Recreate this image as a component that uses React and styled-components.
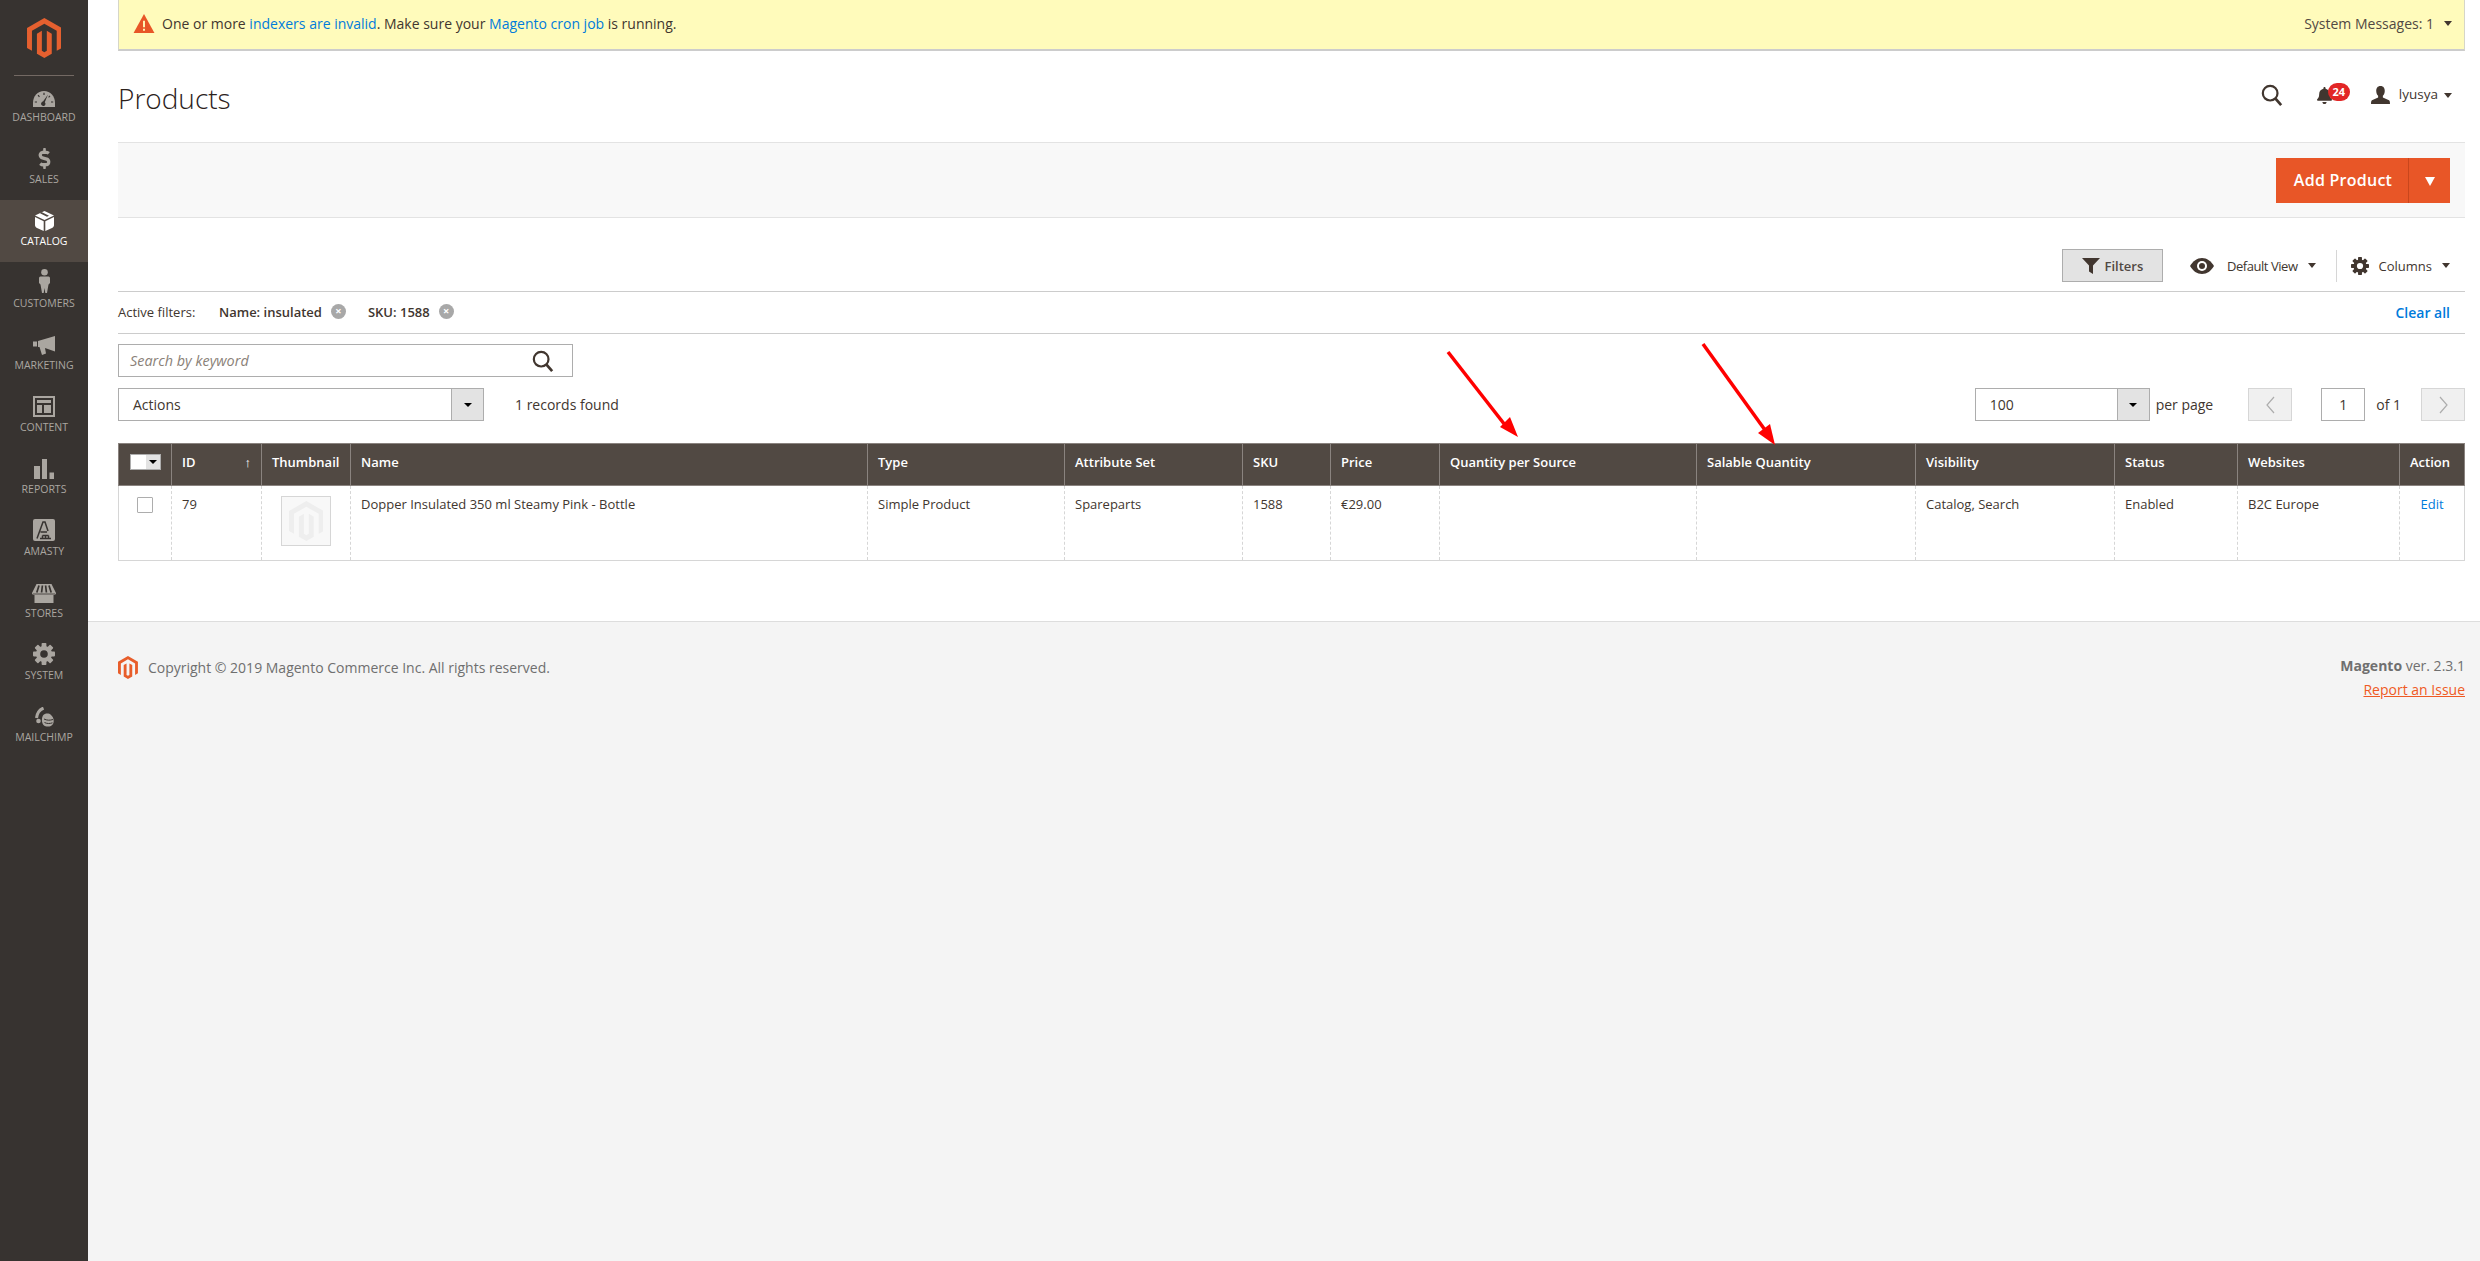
import React from "react";
import styled, { createGlobalStyle } from "styled-components";
import { FaBell, FaDollarSign } from "react-icons/fa";

const Global = createGlobalStyle`
  html, body { margin: 0; padding: 0; }
  body {
    background: #f4f4f4;
    font-family: "Open Sans", "Liberation Sans", sans-serif;
    font-size: 14px;
    color: #41362f;
  }
  * { box-sizing: border-box; }
`;

const Shell = styled.div`
  display: flex;
  min-height: 100vh;
`;

const Sidebar = styled.nav`
  width: 88px;
  flex: none;
  background: #373330;
  display: flex;
  flex-direction: column;
`;

const LogoBox = styled.div`
  height: 75px;
  display: flex;
  align-items: flex-start;
  justify-content: center;
  padding-top: 18px;
`;

const LogoLine = styled.div`
  height: 1px;
  margin: 0 14px;
  background: #736963;
`;

const MenuItem = styled.a`
  height: 62px;
  display: flex;
  flex-direction: column;
  align-items: center;
  justify-content: flex-end;
  padding-bottom: 13px;
  gap: 3px;
  font-size: 10.5px;
  line-height: 15px;
  color: ${(p) => (p.$active ? "#fff" : "#aaa6a0")};
  background: ${(p) => (p.$active ? "#514943" : "transparent")};
  svg { display: block; }
`;

const Main = styled.div`
  flex: 1;
  min-width: 0;
  display: flex;
  flex-direction: column;
`;

const Page = styled.div`
  background: #fff;
  padding: 0 15px 60px 30px;
  height: 621px;
`;

const Notice = styled.div`
  height: 51px;
  background: #fffbbb;
  border: 1px solid #d6d6c8;
  border-top: 0;
  border-bottom: 2px solid #ccc;
  display: flex;
  align-items: center;
  justify-content: space-between;
  padding: 0 12px 3px 14px;
  font-size: 14px;
`;

const NoticeText = styled.div`
  display: flex;
  align-items: center;
  gap: 7px;
`;

const Link = styled.a`
  color: #007bdb;
`;

const Caret = styled.span`
  display: inline-block;
  flex: none;
  width: 0;
  height: 0;
  margin-left: ${(p) => p.$gap || 0}px;
  border-left: ${(p) => p.$size || 4.5}px solid transparent;
  border-right: ${(p) => p.$size || 4.5}px solid transparent;
  border-top: ${(p) => p.$tall || (p.$size || 4.5) + 0.5}px solid ${(p) => p.$color || "#41362f"};
`;

const SysMessages = styled.div`
  display: flex;
  align-items: center;
  gap: 10px;
  color: #514943;
`;

const Header = styled.div`
  height: 91px;
  display: flex;
  align-items: center;
  justify-content: space-between;
`;

const Title = styled.h1`
  margin: 2px 0 0;
  font-size: 28px;
  font-weight: 300;
  line-height: 36px;
  color: #2b211b;
`;

const HeaderTools = styled.div`
  display: flex;
  align-items: center;
  margin: 0 13px 3px 0;
`;

const BellWrap = styled.div`
  position: relative;
  margin: 0 21px 0 33px;
  width: 34px;
  height: 24px;
  display: flex;
  align-items: center;
`;

const Badge = styled.span`
  position: absolute;
  left: 12px;
  top: 0;
  width: 22px;
  height: 18px;
  border-radius: 9px;
  background: #e22626;
  color: #fff;
  font-size: 11px;
  font-weight: 700;
  line-height: 18px;
  text-align: center;
`;

const UserName = styled.span`
  font-size: 13.5px;
  margin: 0 6px 2px 9px;
`;

const ActionBar = styled.div`
  height: 76px;
  background: #f8f8f8;
  border-top: 1px solid #e3e3e3;
  border-bottom: 1px solid #e3e3e3;
  display: flex;
  align-items: center;
  justify-content: flex-end;
  padding-right: 15px;
`;

const AddButton = styled.div`
  height: 45px;
  width: 174px;
  display: flex;
  background: #e85627;
  color: #fff;
  font-size: 16px;
  font-weight: 600;
  letter-spacing: 0.25px;
`;

const AddLabel = styled.div`
  width: 133px;
  padding-left: 2px;
  display: flex;
  align-items: center;
  justify-content: center;
  border-right: 1px solid #c9461c;
`;

const AddArrow = styled.div`
  flex: 1;
  display: flex;
  align-items: center;
  justify-content: center;
  padding-top: 2px;
`;

const GridTools = styled.div`
  height: 74px;
  border-bottom: 1px solid #ccc;
  display: flex;
  align-items: flex-end;
  justify-content: flex-end;
  padding: 0 15px 9px 0;
`;

const FilterButton = styled.div`
  width: 101px;
  height: 33px;
  margin-right: 27px;
  background: #e3e3e3;
  border: 1px solid #adadad;
  display: flex;
  align-items: center;
  justify-content: center;
  gap: 5px;
  font-size: 13px;
  font-weight: 600;
  color: #514943;
`;

const ToolLabel = styled.div`
  display: flex;
  align-items: center;
  gap: ${(p) => p.$gap}px;
  font-size: 13px;
  height: 33px;
  color: #41362f;
  letter-spacing: ${(p) => p.$spacing || 0}px;
`;

const ToolDivider = styled.div`
  width: 1px;
  height: 32px;
  background: #d6d6d6;
  margin: 0 14px 0 20px;
`;

const ActiveFilters = styled.div`
  height: 42px;
  border-bottom: 1px solid #ccc;
  display: flex;
  align-items: center;
  justify-content: space-between;
  font-size: 13px;
  padding-right: 15px;
`;

const FilterGroup = styled.div`
  display: flex;
  align-items: center;
  margin-bottom: 2px;
`;

const FilterLabel = styled.span`
  width: 101px;
`;

const FilterChip = styled.span`
  display: flex;
  align-items: center;
  gap: 9px;
  font-weight: 600;
  margin-right: 22px;
`;

const ChipClose = styled.span`
  width: 15px;
  height: 15px;
  border-radius: 50%;
  background: #a8a8a8;
  color: #fff;
  font-size: 11px;
  font-weight: 700;
  line-height: 14px;
  text-align: center;
`;

const ClearAll = styled.a`
  color: #007bdb;
  font-size: 14px;
  font-weight: 600;
`;

const SearchBox = styled.div`
  margin-top: 10px;
  width: 455px;
  height: 33px;
  border: 1px solid #adadad;
  display: flex;
  align-items: center;
  justify-content: space-between;
  padding: 0 18px 0 11px;
  font-size: 14.4px;
  font-style: italic;
  color: #8a8178;
`;

const ControlRow = styled.div`
  margin-top: 11px;
  height: 33px;
  display: flex;
  align-items: center;
  justify-content: space-between;
`;

const ControlGroup = styled.div`
  display: flex;
  align-items: center;
`;

const SelectBox = styled.div`
  width: ${(p) => p.$width}px;
  height: 33px;
  border: 1px solid #adadad;
  display: flex;
  align-items: center;
  padding-left: 14px;
  font-size: 14px;
`;

const SelectLabel = styled.span`
  flex: 1;
`;

const SelectArrow = styled.span`
  width: 32px;
  height: 100%;
  background: #e3e3e3;
  border-left: 1px solid #adadad;
  display: flex;
  align-items: center;
  justify-content: center;
`;

const Records = styled.span`
  margin-left: 31px;
  font-size: 14px;
`;

const PagerText = styled.span`
  font-size: 14px;
  margin: ${(p) => p.$margin};
`;

const PageStep = styled.span`
  width: 44px;
  height: 33px;
  background: #f0f0f0;
  border: 1px solid #d6d6d6;
  display: flex;
  align-items: center;
  justify-content: center;
`;

const PageInput = styled.span`
  width: 44px;
  height: 33px;
  border: 1px solid #adadad;
  display: flex;
  align-items: center;
  justify-content: center;
  margin-left: 29px;
  font-size: 14px;
`;

const Table = styled.div`
  position: relative;
  margin-top: 22px;
`;

const Row = styled.div`
  display: grid;
  grid-template-columns: 53px 90px 89px 517px 197px 178px 88px 109px 257px 219px 199px 123px 162px 66px;
`;

const HeadCell = styled.div`
  height: 43px;
  background: #514943;
  border-top: 1px solid #8a837f;
  border-bottom: 1px solid #8a837f;
  border-left: 1px solid #8a837f;
  border-right: ${(p) => (p.$last ? "1px solid #8a837f" : "0")};
  color: #fff;
  font-size: 13px;
  font-weight: 600;
  display: flex;
  align-items: center;
  justify-content: space-between;
  padding: 0 ${(p) => p.$padRight || 10}px 5px ${(p) => p.$pad ?? 10}px;
`;

const SortArrow = styled.span`
  font-size: 13px;
  font-weight: 400;
`;

const BodyRow = styled(Row)`
  height: 75px;
  border-bottom: 1px solid #d6d6d6;
`;

const Cell = styled.div`
  border-left: 1px ${(p) => (p.$first ? "solid" : "dashed")} #d6d6d6;
  border-right: ${(p) => (p.$last ? "1px solid #d6d6d6" : "0")};
  padding: ${(p) => p.$padding || "9px 10px"};
  font-size: 13px;
  line-height: 18px;
  color: #41362f;
  text-align: ${(p) => p.$align || "left"};
`;

const HeadCheck = styled.div`
  width: 31px;
  height: 16px;
  display: flex;
  background: #e3e3e3;
  border: 1px solid #adadad;
`;

const HeadCheckBox = styled.span`
  width: 15px;
  background: #fff;
`;

const HeadCheckArrow = styled.span`
  flex: 1;
  display: flex;
  align-items: center;
  justify-content: center;
`;

const RowCheck = styled.div`
  width: 16px;
  height: 16px;
  border: 1px solid #adadad;
  border-radius: 1px;
  background: #fff;
  margin: 2px 0 0 8px;
`;

const Thumb = styled.div`
  width: 50px;
  height: 50px;
  border: 1px solid #d6d6d6;
  background: #f8f8f8;
  display: flex;
  align-items: center;
  justify-content: center;
  margin: 1px auto 0;
`;

const Arrows = styled.svg`
  position: absolute;
  left: 1300px;
  top: -108px;
  overflow: visible;
  pointer-events: none;
`;

const Footer = styled.footer`
  border-top: 1px solid #ddd;
  padding: 29px 15px 0 30px;
  display: flex;
  justify-content: space-between;
  color: #6f6f6f;
  font-size: 14px;
`;

const Copyright = styled.div`
  display: flex;
  align-items: center;
  gap: 10px;
  height: 32px;
`;

const Version = styled.div`
  margin-top: 3px;
  text-align: right;
  line-height: 24px;
`;

const ReportLink = styled.a`
  color: #ef5a24;
  text-decoration: underline;
  display: block;
`;

function MagentoLogo({ height = 40, color = "#e5602f" }) {
  return (
    <svg width={height * 0.867} height={height} viewBox="1.6 0 20.8 24">
      <path
        fill={color}
        d="M12 24l-4.455-2.572v-12l2.97-1.715v12.001l1.485.902 1.485-.902V7.713l2.97 1.715v12L12 24zM22.391 6v12l-2.969 1.714V7.713L12 3.43 4.574 7.713v12.001L1.609 18V6L12 0l10.391 6z"
      />
    </svg>
  );
}

const Ico = ({ children, w, h }) => (
  <svg width={w} height={h} viewBox={`0 0 ${w} ${h}`} fill="currentColor">
    {children}
  </svg>
);

const Gear = ({ size = 22, color = "currentColor", hole = "#373330" }) => (
  <svg width={size} height={size} viewBox="0 0 22 22">
    <g fill={color}>
      <circle cx="11" cy="11" r="8" />
      {[0, 45, 90, 135, 180, 225, 270, 315].map((a) => (
        <rect key={a} x="8.6" y="0" width="4.8" height="5" rx="0.8" transform={`rotate(${a} 11 11)`} />
      ))}
    </g>
    <circle cx="11" cy="11" r="3.8" fill={hole} />
  </svg>
);

const DARK = "#373330";

const iconGauge = (
  <Ico w={22} h={16}>
    <path d="M11 0C4.5 0 0 5 0 12V16H22V12C22 5 17.5 0 11 0Z" />
    <path d="M15 3.5L11.8 11.2a2.2 2.2 0 1 1-1.8-.6Z" fill={DARK} />
    <path d="M10.4 1.8h1.2v2.2h-1.2zM4.6 4.6l.9-.8 1.4 1.6-.9.8zM1.8 10.4h2.2v1.2H1.8zM18 10.4h2.2v1.2H18zM16.6 4.4l.8.8-1.4 1.5-.8-.8z" fill={DARK} />
  </Ico>
);
const iconBox = (
  <Ico w={19} h={20}>
    <path fillRule="evenodd" d="M9.5 0L19 4.5L9.5 9L0 4.5Z M5 2.2L12 5.8L14 4.8L7 1.3Z" />
    <path d="M0 6L8.7 10.2V20L2 17C.8 16.4 0 15.5 0 14Z" />
    <path d="M19 6L10.3 10.2V20L17 17C18.2 16.4 19 15.5 19 14Z" />
  </Ico>
);
const iconPerson = (
  <Ico w={11} h={24}>
    <circle cx="5.5" cy="3.3" r="3.3" />
    <path d="M1.5 7.5h8c1 0 1.5.8 1.5 2V14l-1.5 1.5L8 24H6.3L5.5 19l-.8 5H3L1.5 15.5 0 14V9.5c0-1.2.5-2 1.5-2Z" />
  </Ico>
);
const iconMegaphone = (
  <Ico w={22} h={19}>
    <path d="M0 5.5H4V10.5H0Z M5 5L22 0V15.5L12 12L13 17.5L9 19L6.5 11H5Z" />
  </Ico>
);
const iconLayout = (
  <Ico w={22} h={21}>
    <path
      fillRule="evenodd"
      d="M0 0H22V21H0ZM2 2V19H20V2Z M4 4H18V7H4Z M4 9H9V17H4Z M11 9H18V17H11Z"
    />
  </Ico>
);
const iconBars = (
  <Ico w={20} h={20}>
    <path d="M0 7H6V20H0Z M8 0H13V20H8Z M15.5 13.5H20V20H15.5Z" />
  </Ico>
);
const iconAmasty = (
  <Ico w={22} h={22}>
    <rect width="22" height="22" rx="2" />
    <path d="M4 19.5L10 3H12L15 12M7.5 13H14M7 19.5H18M9.5 16.5V19.5M12.5 16.5V19.5M15.5 16.5V19.5M9.5 16.5H15.5" stroke={DARK} strokeWidth="1.5" fill="none" />
  </Ico>
);
const iconStore = (
  <Ico w={24} h={19}>
    <path d="M4.5 0H19.5L24 9C24 10.5 22.8 11 21.5 11V19H2.5V11C1.2 11 0 10.5 0 9Z" />
    <path d="M7 1.5L4.8 8.5M10.4 1.5L9.6 8.5M13.6 1.5L14.4 8.5M17 1.5L19.2 8.5" stroke={DARK} strokeWidth="1.7" fill="none" />
    <path d="M1 10H23" stroke={DARK} strokeWidth="0.8" />
  </Ico>
);
const iconMailchimp = (
  <Ico w={20} h={20}>
    <path d="M2.5 11C3 6 6 2.5 9.5 1" stroke="currentColor" strokeWidth="3" fill="none" />
    <circle cx="4.5" cy="14" r="2.3" />
    <path d="M9 8.5C11 6 15 6 17 8C19.5 10 20.5 14 19 17C17.5 20 12 20.5 9.5 18C7.5 16 7.5 11 9 8.5Z" />
    <path d="M10 12C13 13.5 16 13.5 19 12.5M10.5 15.5C13 16.8 16 16.8 18.5 15.8" stroke={DARK} strokeWidth="1" fill="none" />
  </Ico>
);

const menu = [
  { label: "DASHBOARD", icon: iconGauge },
  { label: "SALES", icon: <FaDollarSign size={21} /> },
  { label: "CATALOG", icon: iconBox, active: true },
  { label: "CUSTOMERS", icon: iconPerson },
  { label: "MARKETING", icon: iconMegaphone },
  { label: "CONTENT", icon: iconLayout },
  { label: "REPORTS", icon: iconBars },
  { label: "AMASTY", icon: iconAmasty },
  { label: "STORES", icon: iconStore },
  { label: "SYSTEM", icon: <Gear /> },
  { label: "MAILCHIMP", icon: iconMailchimp },
];

const SearchIcon = ({ size = 22 }) => (
  <svg width={size} height={size} viewBox="0 0 24 24" fill="none" stroke="#41362f" strokeWidth="2.4">
    <circle cx="10" cy="10" r="8" />
    <path d="M15.8 16L22 23" strokeWidth="3" />
  </svg>
);

const UserIcon = () => (
  <svg width="19" height="18" viewBox="0 0 20 19" fill="#41362f">
    <path d="M10 0C6.8 0 5.5 2.4 5.5 5.2c0 2.4 1 4.2 2 5.2v1.8L1 15c-.8.4-1 1.5-1 4h20c0-2.5-.2-3.6-1-4l-6.5-2.8v-1.8c1-1 2-2.8 2-5.2C14.5 2.4 13.2 0 10 0Z" />
  </svg>
);

const FunnelIcon = () => (
  <svg width="18" height="16" viewBox="0 0 18 16" fill="#41362f">
    <path d="M0 0H18L11 7.5V16L7 13.5V7.5Z" />
  </svg>
);

const EyeIcon = () => (
  <svg width="24" height="16" viewBox="0 0 24 16">
    <path fill="#41362f" d="M0 8C3 3 7 0 12 0s9 3 12 8c-3 5-7 8-12 8S3 13 0 8Z" />
    <circle cx="12" cy="8" r="5" fill="#fff" />
    <circle cx="12" cy="8" r="3" fill="#41362f" />
  </svg>
);

const Chevron = ({ flip }) => (
  <svg width="9" height="18" viewBox="0 0 9 18" fill="none" stroke="#adadad" strokeWidth="1.2">
    <path d={flip ? "M1 1L8 9L1 17" : "M8 1L1 9L8 17"} />
  </svg>
);

const columns = [
  "ID",
  "Thumbnail",
  "Name",
  "Type",
  "Attribute Set",
  "SKU",
  "Price",
  "Quantity per Source",
  "Salable Quantity",
  "Visibility",
  "Status",
  "Websites",
  "Action",
];

const cells = [
  "Dopper Insulated 350 ml Steamy Pink - Bottle",
  "Simple Product",
  "Spareparts",
  "1588",
  "€29.00",
  "",
  "",
  "Catalog, Search",
  "Enabled",
  "B2C Europe",
];

export default function App() {
  return (
    <Shell>
      <Global />
      <Sidebar>
        <LogoBox>
          <MagentoLogo />
        </LogoBox>
        <LogoLine />
        {menu.map((m) => (
          <MenuItem key={m.label} $active={m.active}>
            {m.icon}
            {m.label}
          </MenuItem>
        ))}
      </Sidebar>
      <Main>
        <Page>
          <Notice>
            <NoticeText>
              <svg width="22" height="19" viewBox="0 0 22 20">
                <path fill="#e85627" d="M11 0L22 20H0Z" />
                <path fill="#fffbbb" d="M10 7h2v7h-2zM10 15.5h2v2h-2z" />
              </svg>
              <span>
                One or more <Link>indexers are invalid</Link>. Make sure your{" "}
                <Link>Magento cron job</Link> is running.
              </span>
            </NoticeText>
            <SysMessages>
              System Messages: 1 <Caret />
            </SysMessages>
          </Notice>
          <Header>
            <Title>Products</Title>
            <HeaderTools>
              <SearchIcon />
              <BellWrap>
                <FaBell size={17} color="#41362f" />
                <Badge>24</Badge>
              </BellWrap>
              <UserIcon />
              <UserName>lyusya</UserName>
              <Caret />
            </HeaderTools>
          </Header>
          <ActionBar>
            <AddButton>
              <AddLabel>Add Product</AddLabel>
              <AddArrow>
                <Caret $size={5.5} $tall={9} $color="#fff" />
              </AddArrow>
            </AddButton>
          </ActionBar>
          <GridTools>
            <FilterButton>
              <FunnelIcon />
              Filters
            </FilterButton>
            <ToolLabel $gap={13} $spacing={-0.45}>
              <EyeIcon />
              Default View
              <Caret $gap={-3} />
            </ToolLabel>
            <ToolDivider />
            <ToolLabel $gap={10}>
              <Gear size={18} color="#41362f" hole="#fff" />
              Columns
              <Caret />
            </ToolLabel>
          </GridTools>
          <ActiveFilters>
            <FilterGroup>
              <FilterLabel>Active filters:</FilterLabel>
              <FilterChip>
                Name: insulated <ChipClose>×</ChipClose>
              </FilterChip>
              <FilterChip>
                SKU: 1588 <ChipClose>×</ChipClose>
              </FilterChip>
            </FilterGroup>
            <ClearAll>Clear all</ClearAll>
          </ActiveFilters>
          <SearchBox>
            Search by keyword
            <SearchIcon />
          </SearchBox>
          <ControlRow>
            <ControlGroup>
              <SelectBox $width={366}>
                <SelectLabel>Actions</SelectLabel>
                <SelectArrow>
                  <Caret $size={4} $color="#000" />
                </SelectArrow>
              </SelectBox>
              <Records>1 records found</Records>
            </ControlGroup>
            <ControlGroup>
              <SelectBox $width={175}>
                <SelectLabel>100</SelectLabel>
                <SelectArrow>
                  <Caret $size={4} $color="#000" />
                </SelectArrow>
              </SelectBox>
              <PagerText $margin="0 35px 0 6px">per page</PagerText>
              <PageStep>
                <Chevron />
              </PageStep>
              <PageInput>1</PageInput>
              <PagerText $margin="0 20px 0 11px">of 1</PagerText>
              <PageStep>
                <Chevron flip />
              </PageStep>
            </ControlGroup>
          </ControlRow>
          <Table>
            <Row>
              <HeadCell $pad={11}>
                <HeadCheck>
                  <HeadCheckBox />
                  <HeadCheckArrow>
                    <Caret $size={4} $color="#000" />
                  </HeadCheckArrow>
                </HeadCheck>
              </HeadCell>
              {columns.map((c, i) => (
                <HeadCell key={c} $last={i === columns.length - 1}>
                  {c}
                  {c === "ID" && <SortArrow>↑</SortArrow>}
                </HeadCell>
              ))}
            </Row>
            <BodyRow>
              <Cell $first>
                <RowCheck />
              </Cell>
              <Cell>79</Cell>
              <Cell $padding="9px 0">
                <Thumb>
                  <MagentoLogo height={40} color="#eeeeee" />
                </Thumb>
              </Cell>
              {cells.map((c, i) => (
                <Cell key={i}>{c}</Cell>
              ))}
              <Cell $last $align="center">
                <Link>Edit</Link>
              </Cell>
            </BodyRow>
            <Arrows width="380" height="112" viewBox="0 0 380 112">
              <path d="M30 17L87 90" stroke="#ff0000" strokeWidth="3.5" />
              <path d="M82 92L92 82L100 102Z" fill="#ff0000" />
              <path d="M285 9L347 95" stroke="#ff0000" strokeWidth="3.5" />
              <path d="M340 98L352 89L357 110Z" fill="#ff0000" />
            </Arrows>
          </Table>
        </Page>
        <Footer>
          <Copyright>
            <MagentoLogo height={23} color="#e85d2a" />
            Copyright © 2019 Magento Commerce Inc. All rights reserved.
          </Copyright>
          <Version>
            <div>
              <b>Magento</b> ver. 2.3.1
            </div>
            <ReportLink>Report an Issue</ReportLink>
          </Version>
        </Footer>
      </Main>
    </Shell>
  );
}
